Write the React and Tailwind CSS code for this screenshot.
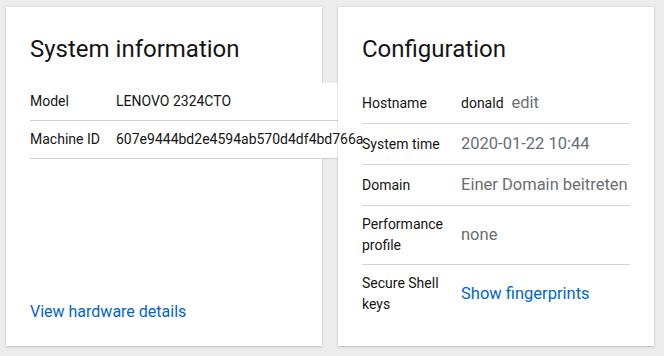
import React from 'react';

const font = { fontFamily: 'Roboto, "Liberation Sans", sans-serif' };

const systemRows = [
    { label: 'Model', value: 'LENOVO 2324CTO' },
    { label: 'Machine ID', value: '607e9444bd2e4594ab570d4df4bd766a' },
];

const Card = ({ title, children }) => (
    <div className="w-[316px] h-[339px] shrink-0 bg-white px-6 pt-6 pb-[22px] flex flex-col shadow-[0_1px_2px_rgba(3,3,3,0.16),0_0_2px_rgba(3,3,3,0.1)]">
        <h2 className="text-[24px] leading-[36px] text-[#151515] mb-4">{title}</h2>
        {children}
    </div>
);

const App = () => {
    return (
        <div className="w-[664px] h-[356px] bg-[#ececec] pl-[6px] pt-[7px] flex gap-4" style={font}>
            {/* System information */}
            <Card title="System information">
                <div className="bg-white w-max text-[14px] leading-[21px] text-[#151515]">
                    {systemRows.map(row => (
                        <div key={row.label} className="flex border-b border-[#d2d2d2]">
                            <div className="w-[86px] shrink-0 py-2">{row.label}</div>
                            {/* the long id runs out of the card and is drawn over the next one */}
                            <div className="relative py-2">{row.value}</div>
                        </div>
                    ))}
                </div>
                <a className="mt-auto text-[16px] leading-[24px] text-[#0066cc]">View hardware details</a>
            </Card>

            {/* Configuration */}
            <Card title="Configuration">
                <div className="text-[14px] leading-[21px] text-[#151515]">
                    <div className="flex items-center border-b border-[#d2d2d2]">
                        <div className="w-[99px] shrink-0 pr-4 py-2">Hostname</div>
                        <div className="py-2 leading-[24px]">
                            <span>donald</span>
                            <span className="ml-2 text-[16.5px] text-[#6a6e73]">edit</span>
                        </div>
                    </div>
                    <div className="flex items-center border-b border-[#d2d2d2]">
                        <div className="w-[99px] shrink-0 pr-4 py-2">System time</div>
                        <div className="py-2 text-[16.5px] leading-[24px] text-[#6a6e73]">2020-01-22 10:44</div>
                    </div>
                    <div className="flex items-center border-b border-[#d2d2d2]">
                        <div className="w-[99px] shrink-0 pr-4 py-2">Domain</div>
                        <div className="py-2 text-[16.5px] leading-[24px] text-[#6a6e73] whitespace-nowrap">Einer Domain beitreten</div>
                    </div>
                    <div className="flex items-center border-b border-[#d2d2d2]">
                        <div className="w-[99px] shrink-0 pr-4 py-2">Performance profile</div>
                        <div className="py-2 text-[16.5px] leading-[24px] text-[#6a6e73]">none</div>
                    </div>
                    <div className="flex items-center">
                        <div className="w-[99px] shrink-0 pr-4 py-2">Secure Shell keys</div>
                        <div className="py-2 text-[16.5px] leading-[24px] text-[#0066cc]">Show fingerprints</div>
                    </div>
                </div>
            </Card>
        </div>
    );
};

export default App;
